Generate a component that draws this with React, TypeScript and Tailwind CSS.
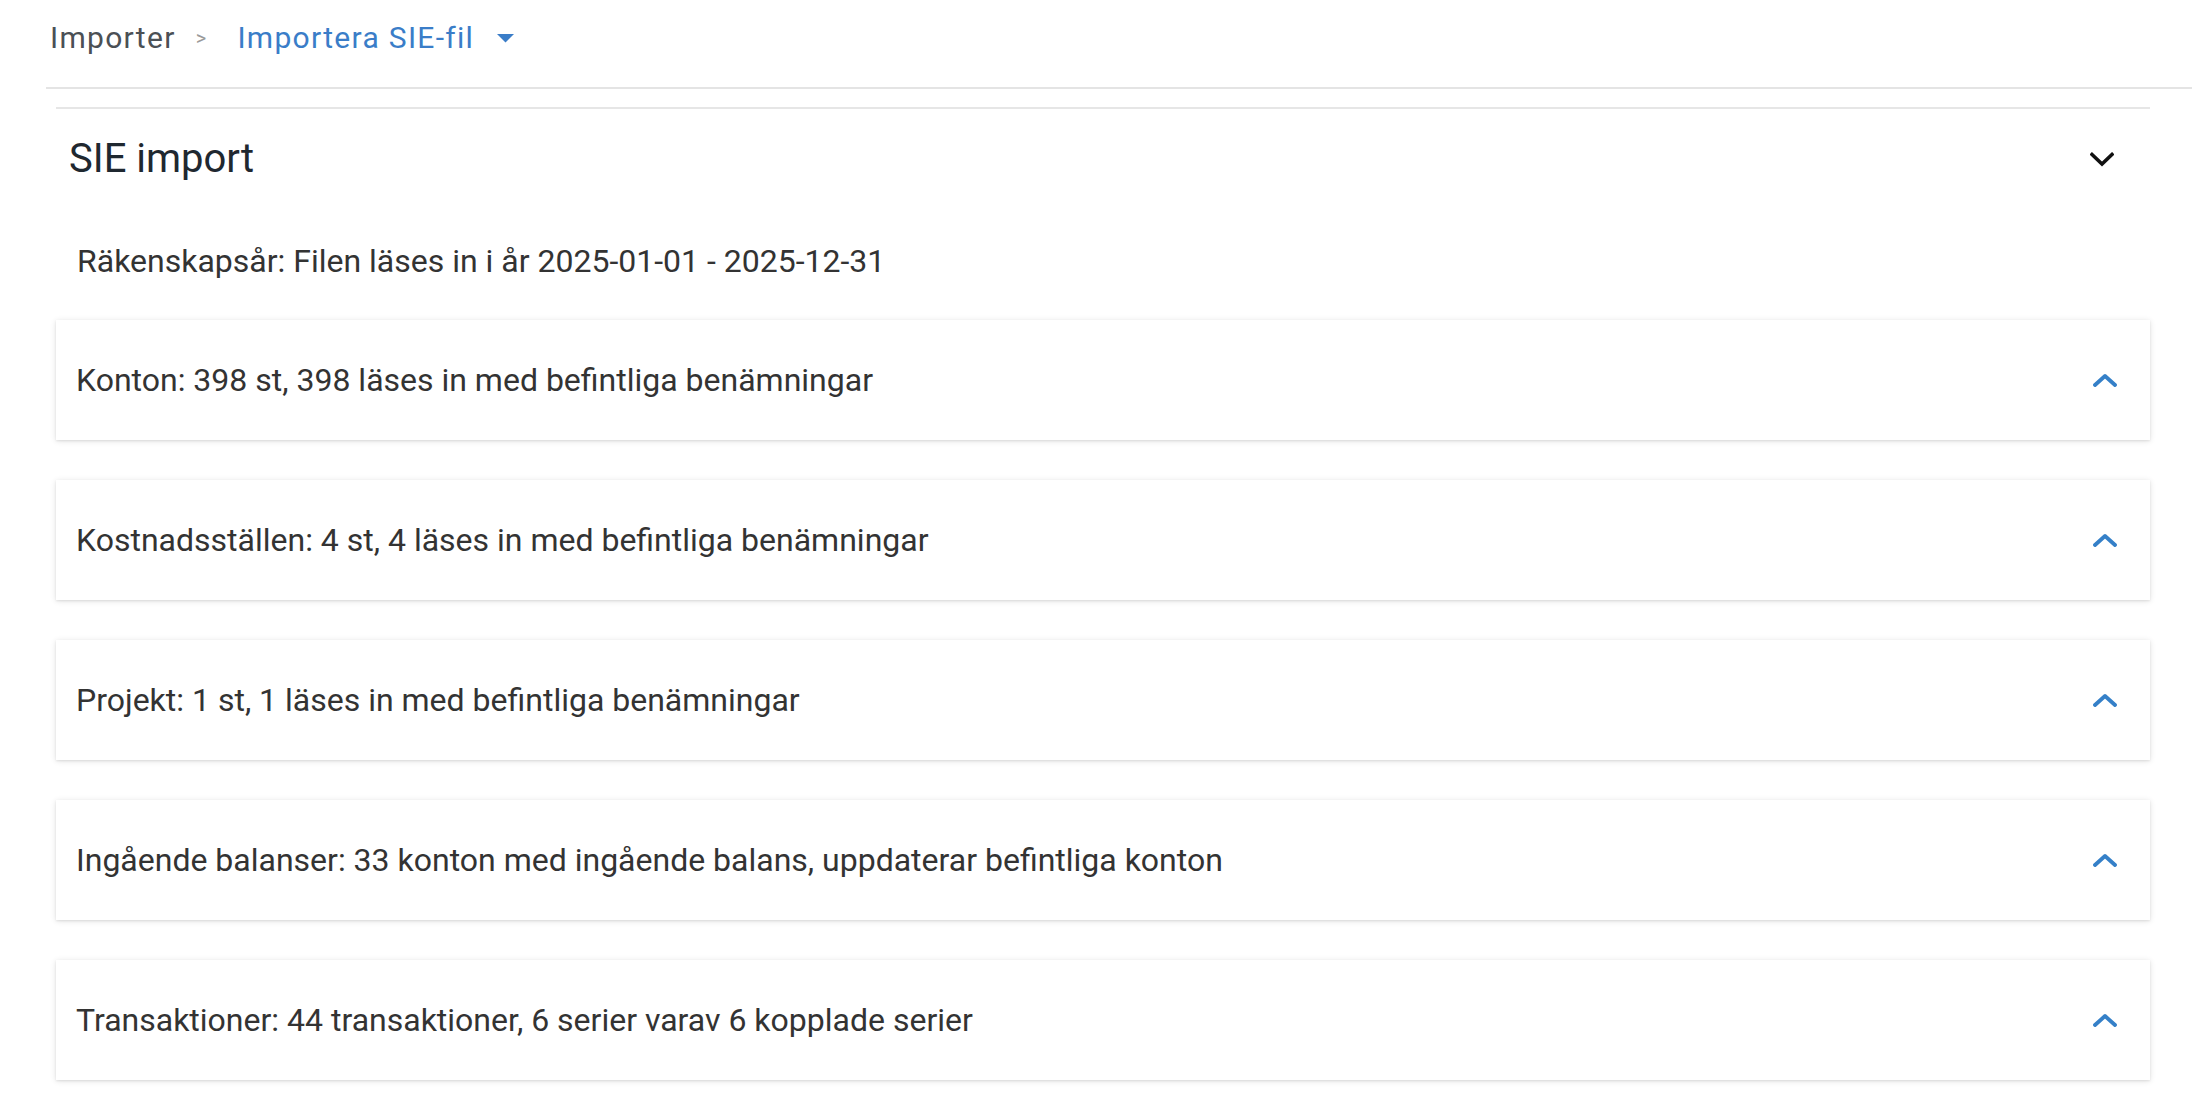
import React from 'react';

const sections = [
  'Konton: 398 st, 398 läses in med befintliga benämningar',
  'Kostnadsställen: 4 st, 4 läses in med befintliga benämningar',
  'Projekt: 1 st, 1 läses in med befintliga benämningar',
  'Ingående balanser: 33 konton med ingående balans, uppdaterar befintliga konton',
  'Transaktioner: 44 transaktioner, 6 serier varav 6 kopplade serier',
];

const ChevronUp = () => (
  <svg width="24" height="14" viewBox="0 0 24 14" fill="none">
    <path d="M2 12 L12 3 L22 12" stroke="#3580c8" strokeWidth="3.8" strokeLinecap="round" strokeLinejoin="round" />
  </svg>
);

const ChevronDown = () => (
  <svg width="24" height="15" viewBox="0 0 24 15" fill="none">
    <path d="M2 2.5 L12 12 L22 2.5" stroke="#111" strokeWidth="3.6" strokeLinecap="square" />
  </svg>
);

const App: React.FC = () => {
  return (
    <div className="min-h-screen bg-white pl-[46px] pr-[10px] font-['Roboto',sans-serif]">
      {/* Breadcrumb */}
      <div className="h-[89px] border-b-2 border-[#e4e4e4] pl-[4px] pt-[21px]">
        <div className="flex items-center text-[30px] leading-[34px] tracking-[1.3px]">
          <span className="text-[#4b5055]">Importer</span>
          <span className="ml-[20px] text-[20px] text-[#9a9a9a]">&gt;</span>
          <span className="ml-[30px] text-[#3a7dc8]">Importera SIE-fil</span>
          <svg className="ml-[23px]" width="17" height="9" viewBox="0 0 17 9">
            <path d="M0 0 L17 0 L8.5 8.5 Z" fill="#3a7dc8" />
          </svg>
        </div>
      </div>

      <div className="ml-[10px] mr-[42px] mt-[18px] border-t-2 border-[#e6e6e6]">
        {/* Header */}
        <div className="flex h-[98px] items-center justify-between pt-[2px] pl-[13px] pr-[36px]">
          <h1 className="text-[40px] leading-[48px] text-[#1f2830]">SIE import</h1>
          <ChevronDown />
        </div>

        <p className="mt-[34px] mb-[39px] pl-[21px] text-[32px] leading-[40px] text-[#333]">
          Räkenskapsår: Filen läses in i år 2025-01-01 - 2025-12-31
        </p>

        <div className="flex flex-col gap-[40px]">
          {sections.map((s) => (
            <div
              key={s}
              className="flex h-[120px] items-center justify-between bg-white pl-[20px] pr-[33px] shadow-[0_1px_6px_rgba(0,0,0,0.12),0_1px_2px_rgba(0,0,0,0.08)]"
            >
              <span className="text-[32px] leading-[40px] text-[#333]">{s}</span>
              <ChevronUp />
            </div>
          ))}
        </div>
      </div>
    </div>
  );
};

export default App;
